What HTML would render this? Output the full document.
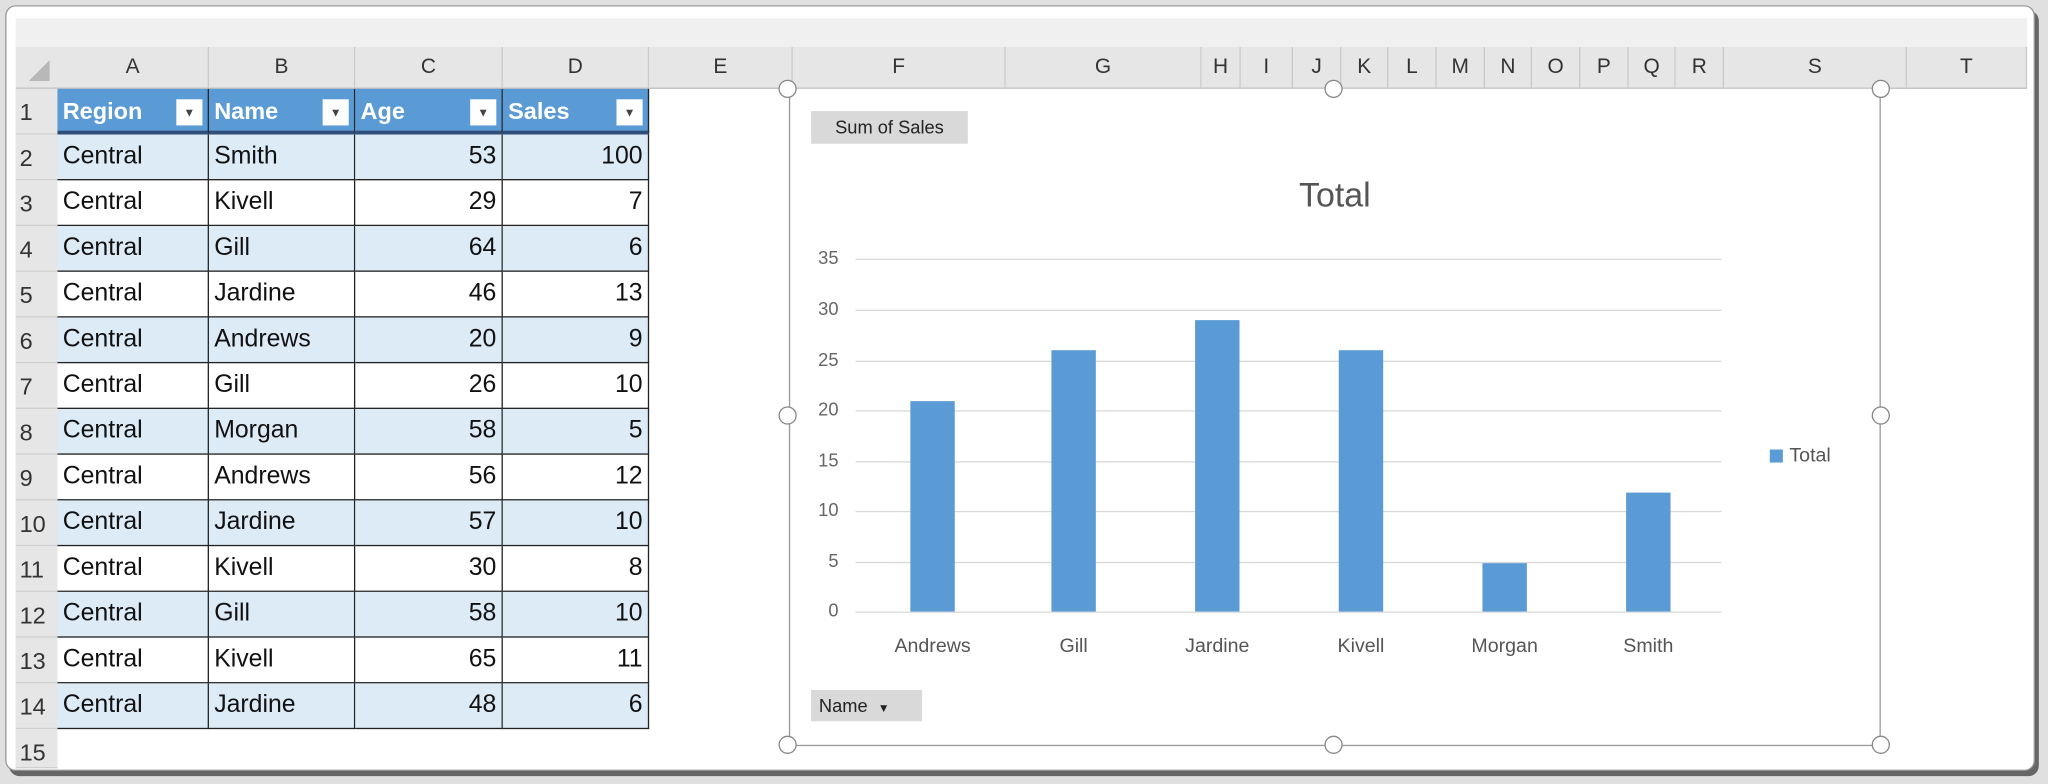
<!DOCTYPE html>
<html><head><meta charset="utf-8"><style>
html,body{margin:0;padding:0;background:#fff;overflow:hidden}
#w{position:absolute;left:0;top:0;width:1568px;height:600px;transform:scale(1.30612,1.30667);transform-origin:0 0;font-family:"Liberation Sans",sans-serif;background:#e0e0e0}
.a{position:absolute}
.card{left:4px;top:4px;width:1552px;height:584px;background:#fff;border:1px solid #999;border-radius:8px;box-shadow:3px 4px 0 #666}
.hd{top:36px;height:32px;background:#e6e6e6;border-right:1px solid #c8c8c8;border-bottom:1px solid #bdbdbd;font-size:16px;color:#333;text-align:center;line-height:32px;box-sizing:border-box}
.rh{left:12px;width:32px;height:35px;background:#e6e6e6;border-bottom:1px solid #cfcfcf;font-size:18px;color:#333;line-height:36px;padding-left:3px;box-sizing:border-box}
.c{height:35px;box-sizing:border-box;border-right:1.5px solid #222;border-bottom:1.5px solid #222;font-size:19px;color:#111;line-height:34px;padding:0 4px}
.th{background:#5b9bd5;color:#fff;font-weight:bold;font-size:18px;border-bottom:3px solid #2f4f7a}
.dd{position:absolute;right:4px;top:8px;width:20px;height:20px;background:#fff;font-size:9px;color:#444;line-height:20px;text-align:center;font-weight:normal}
.r{text-align:right}
.b{background:#ddebf7}
.h{width:12px;height:12px;border:1.5px solid #888;border-radius:50%;background:#fff}
.yl{left:622px;width:20px;text-align:right;font-size:14px;color:#666}
.xl{top:486px;font-size:15px;color:#555;width:100px;text-align:center}
.bar{background:#5b9bd5;width:34px}
.gl{left:655px;width:663px;height:1px;background:#d9d9d9}
</style></head><body><div id="w">
<div class="a card"></div>
<div class="a" style="left:12px;top:14px;width:1540px;height:22px;background:#f0f0f0;border-bottom:1px solid #ddd"></div>
<div class="a" style="left:12px;top:36px;width:32px;height:32px;background:#e6e6e6;border-bottom:1px solid #bdbdbd;box-sizing:border-box"><div class="a" style="left:10px;top:10px;width:0;height:0;border-left:16px solid transparent;border-bottom:16px solid #b8b8b8"></div></div>
<div class="a hd" style="left:44px;width:116px">A</div>
<div class="a hd" style="left:160px;width:112px">B</div>
<div class="a hd" style="left:272px;width:113px">C</div>
<div class="a hd" style="left:385px;width:112px">D</div>
<div class="a hd" style="left:497px;width:110px">E</div>
<div class="a hd" style="left:607px;width:163px">F</div>
<div class="a hd" style="left:770px;width:150px">G</div>
<div class="a hd" style="left:920px;width:30px">H</div>
<div class="a hd" style="left:950px;width:40px">I</div>
<div class="a hd" style="left:990px;width:37px">J</div>
<div class="a hd" style="left:1027px;width:36px">K</div>
<div class="a hd" style="left:1063px;width:37px">L</div>
<div class="a hd" style="left:1100px;width:37px">M</div>
<div class="a hd" style="left:1137px;width:36px">N</div>
<div class="a hd" style="left:1173px;width:37px">O</div>
<div class="a hd" style="left:1210px;width:37px">P</div>
<div class="a hd" style="left:1247px;width:36px">Q</div>
<div class="a hd" style="left:1283px;width:37px">R</div>
<div class="a hd" style="left:1320px;width:140px">S</div>
<div class="a hd" style="left:1460px;width:92px">T</div>
<div class="a" style="left:12px;top:68px;width:32px;height:520px;background:#e6e6e6"></div>
<div id="rows"></div>
<script>
var d=[["Central","Smith",53,100],["Central","Kivell",29,7],["Central","Gill",64,6],["Central","Jardine",46,13],["Central","Andrews",20,9],["Central","Gill",26,10],["Central","Morgan",58,5],["Central","Andrews",56,12],["Central","Jardine",57,10],["Central","Kivell",30,8],["Central","Gill",58,10],["Central","Kivell",65,11],["Central","Jardine",48,6]];
var X=[44,160,272,385,497],h="";
function cell(i,y,cls,t){return '<div class="a c '+cls+'" style="left:'+X[i]+'px;top:'+y+'px;width:'+(X[i+1]-X[i])+'px">'+t+'</div>';}
h+='<div class="a rh" style="top:68px">1</div>';
["Region","Name","Age","Sales"].forEach(function(t,i){h+=cell(i,68,"th",t+'<span class="dd">&#9660;</span>');});
d.forEach(function(r,k){var y=103+k*35,b=(k%2==0)?" b":"";h+='<div class="a rh" style="top:'+y+'px">'+(k+2)+'</div>';
h+=cell(0,y,b,r[0])+cell(1,y,b,r[1])+cell(2,y,"r"+b,r[2])+cell(3,y,"r"+b,r[3]);});
h+='<div class="a rh" style="top:558px;height:30px">15</div>';
document.getElementById("rows").innerHTML=h;
</script>
<div class="a" style="left:604px;top:68px;width:836px;height:503px;border:1.5px solid #999;border-top:none;background:#fff;box-sizing:border-box"></div>
<div class="a" style="left:621px;top:85px;width:120px;height:25px;background:#d9d9d9;font-size:14px;color:#222;line-height:25px;text-align:center">Sum of Sales</div>
<div class="a" style="left:922px;top:134px;width:200px;text-align:center;font-size:26px;color:#555">Total</div>
<div class="a gl" style="top:198px"></div><div class="a gl" style="top:237px"></div><div class="a gl" style="top:276px"></div><div class="a gl" style="top:314px"></div><div class="a gl" style="top:353px"></div><div class="a gl" style="top:391px"></div><div class="a gl" style="top:430px"></div><div class="a gl" style="top:468px"></div>
<div class="a yl" style="top:189px">35</div><div class="a yl" style="top:228px">30</div><div class="a yl" style="top:267px">25</div><div class="a yl" style="top:305px">20</div><div class="a yl" style="top:344px">15</div><div class="a yl" style="top:382px">10</div><div class="a yl" style="top:421px">5</div><div class="a yl" style="top:459px">0</div>
<div class="a bar" style="left:697px;top:307px;height:161px"></div>
<div class="a bar" style="left:805px;top:268px;height:200px"></div>
<div class="a bar" style="left:915px;top:245px;height:223px"></div>
<div class="a bar" style="left:1025px;top:268px;height:200px"></div>
<div class="a bar" style="left:1135px;top:431px;height:37px"></div>
<div class="a bar" style="left:1245px;top:377px;height:91px"></div>
<div class="a xl" style="left:664px">Andrews</div><div class="a xl" style="left:772px">Gill</div><div class="a xl" style="left:882px">Jardine</div><div class="a xl" style="left:992px">Kivell</div><div class="a xl" style="left:1102px">Morgan</div><div class="a xl" style="left:1212px">Smith</div>
<div class="a" style="left:1355px;top:344px;width:10px;height:10px;background:#5b9bd5"></div>
<div class="a" style="left:1370px;top:340px;font-size:15px;color:#555">Total</div>
<div class="a" style="left:621px;top:528px;width:85px;height:24px;background:#d9d9d9;font-size:14px;color:#222;line-height:24px;padding-left:6px;box-sizing:border-box">Name &nbsp;<span style="font-size:9px">&#9660;</span></div>
<div class="a h" style="left:596px;top:61px"></div><div class="a h" style="left:1014px;top:61px"></div><div class="a h" style="left:1433px;top:61px"></div>
<div class="a h" style="left:596px;top:311px"></div><div class="a h" style="left:1433px;top:311px"></div>
<div class="a h" style="left:596px;top:563px"></div><div class="a h" style="left:1014px;top:563px"></div><div class="a h" style="left:1433px;top:563px"></div>
</div></body></html>
